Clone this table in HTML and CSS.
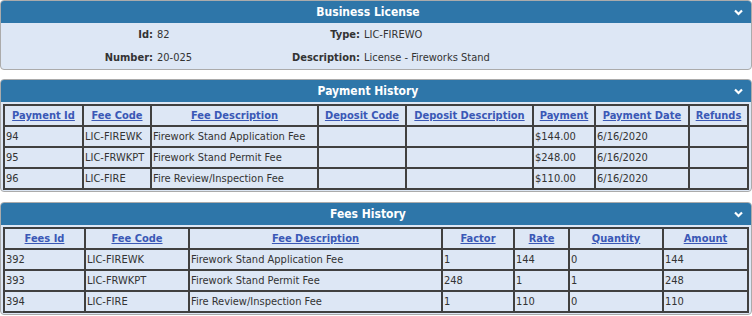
FILE: index.html
```html
<!DOCTYPE html>
<html>
<head>
<meta charset="utf-8">
<title>Business License</title>
<link rel="stylesheet" href="styles.css">
</head>
<body>
<section class="panel panel-info">
  <div class="panel-head">
    <span class="panel-title">Business License</span>
    <svg class="chev" width="9" height="7" viewBox="0 0 9 7"><polyline points="1,1.5 4.5,5 8,1.5" fill="none" stroke="#fff" stroke-width="2.2"/></svg>
  </div>
  <div class="info-grid">
    <div class="lbl">Id:</div><div class="val">82</div>
    <div class="lbl">Type:</div><div class="val">LIC-FIREWO</div>
    <div class="lbl">Number:</div><div class="val">20-025</div>
    <div class="lbl">Description:</div><div class="val">License - Fireworks Stand</div>
  </div>
</section>

<section class="panel panel-pay">
  <div class="panel-head">
    <span class="panel-title">Payment History</span>
    <svg class="chev" width="9" height="7" viewBox="0 0 9 7"><polyline points="1,1.5 4.5,5 8,1.5" fill="none" stroke="#fff" stroke-width="2.2"/></svg>
  </div>
  <div class="panel-body">
    <table class="grid pay">
      <thead>
        <tr>
          <th class="p1"><a href="#">Payment Id</a></th>
          <th class="p2"><a href="#">Fee Code</a></th>
          <th class="p3"><a href="#">Fee Description</a></th>
          <th class="p4"><a href="#">Deposit Code</a></th>
          <th class="p5"><a href="#">Deposit Description</a></th>
          <th class="p6"><a href="#">Payment</a></th>
          <th class="p7"><a href="#">Payment Date</a></th>
          <th class="p8"><a href="#">Refunds</a></th>
        </tr>
      </thead>
      <tbody>
        <tr><td>94</td><td>LIC-FIREWK</td><td>Firework Stand Application Fee</td><td></td><td></td><td>$144.00</td><td>6/16/2020</td><td></td></tr>
        <tr><td>95</td><td>LIC-FRWKPT</td><td>Firework Stand Permit Fee</td><td></td><td></td><td>$248.00</td><td>6/16/2020</td><td></td></tr>
        <tr><td>96</td><td>LIC-FIRE</td><td>Fire Review/Inspection Fee</td><td></td><td></td><td>$110.00</td><td>6/16/2020</td><td></td></tr>
      </tbody>
    </table>
  </div>
</section>

<section class="panel panel-fees">
  <div class="panel-head">
    <span class="panel-title">Fees History</span>
    <svg class="chev" width="9" height="7" viewBox="0 0 9 7"><polyline points="1,1.5 4.5,5 8,1.5" fill="none" stroke="#fff" stroke-width="2.2"/></svg>
  </div>
  <div class="panel-body">
    <table class="grid fees">
      <thead>
        <tr>
          <th class="f1"><a href="#">Fees Id</a></th>
          <th class="f2"><a href="#">Fee Code</a></th>
          <th class="f3"><a href="#">Fee Description</a></th>
          <th class="f4"><a href="#">Factor</a></th>
          <th class="f5"><a href="#">Rate</a></th>
          <th class="f6"><a href="#">Quantity</a></th>
          <th class="f7"><a href="#">Amount</a></th>
        </tr>
      </thead>
      <tbody>
        <tr><td>392</td><td>LIC-FIREWK</td><td>Firework Stand Application Fee</td><td>1</td><td>144</td><td>0</td><td>144</td></tr>
        <tr><td>393</td><td>LIC-FRWKPT</td><td>Firework Stand Permit Fee</td><td>248</td><td>1</td><td>1</td><td>248</td></tr>
        <tr><td>394</td><td>LIC-FIRE</td><td>Fire Review/Inspection Fee</td><td>1</td><td>110</td><td>0</td><td>110</td></tr>
      </tbody>
    </table>
  </div>
</section>
</body>
</html>
```

FILE: styles.css
```css
html, body {
  margin: 0;
  padding: 0;
  background: #ffffff;
}
body {
  font-family: "DejaVu Sans Condensed", "DejaVu Sans", Verdana, sans-serif;
  font-stretch: condensed;
  font-size: 11px;
  line-height: 13px;
  color: #333333;
}
.panel {
  border: 1px solid #ababab;
  border-radius: 4px;
  background: #dde7f5;
  overflow: hidden;
}
.panel-info { margin-bottom: 9px; }
.panel-pay { margin-bottom: 10px; }
.panel-head {
  height: 22px;
  padding-right: 16px;
  background: #2e76a9;
  color: #ffffff;
  display: flex;
  align-items: center;
  justify-content: center;
  position: relative;
}
.panel-title {
  font-weight: bold;
  font-size: 12px;
}
.chev {
  position: absolute;
  right: 8px;
  top: 8px;
}
.info-grid {
  display: grid;
  grid-template-columns: 154px 100px 107px 1fr;
  grid-auto-rows: 23px;
  align-items: center;
}
.lbl {
  font-weight: bold;
  text-align: right;
  padding-right: 2px;
}
.val {
  padding-left: 2px;
}
.panel-body {
  padding: 2px 2px 1px 2px;
}
.grid {
  width: 100%;
  table-layout: fixed;
  border-collapse: separate;
  border-spacing: 0;
  border: 1px solid #404040;
  background: #dde7f5;
}
.grid th, .grid td {
  box-sizing: border-box;
  border: 1px solid #404040;
  overflow: hidden;
  white-space: nowrap;
}
.grid th {
  padding: 3px 2px;
  text-align: center;
  font-weight: bold;
}
.grid th a {
  color: #3a58b6;
  text-decoration: underline;
}
.grid td {
  padding: 3px 1px;
  text-align: left;
  height: 21px;
}
.p1 { width: 79px; }
.p2 { width: 68px; }
.p3 { width: 167px; }
.p4 { width: 88px; }
.p5 { width: 127px; }
.p6 { width: 62px; }
.p7 { width: 94px; }
.p8 { width: 59px; }
.f1 { width: 81px; }
.f2 { width: 104px; }
.f3 { width: 253px; }
.f4 { width: 72px; }
.f5 { width: 55px; }
.f6 { width: 94px; }
.f7 { width: 85px; }
```
